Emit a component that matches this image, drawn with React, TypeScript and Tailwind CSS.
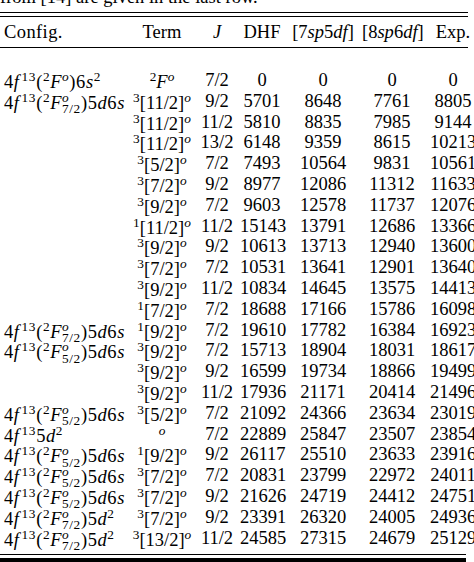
import type { ReactNode } from 'react'

/** Column template shared by the header and every data row. */
const COLS = 'grid grid-cols-[130px_64px_46px_44px_78px_60px_62px]'

type Cfg = 'A' | 'B7' | 'B5' | 'C' | 'D7' | null
type Row = { cfg: Cfg; mult: string | null; term: string; j: string; v: [string, string, string, string] }

const ROWS: Row[] = [
  { cfg: 'A', mult: null, term: '2Fo', j: '7/2', v: ['0', '0', '0', '0'] },
  { cfg: 'B7', mult: '3', term: '11/2', j: '9/2', v: ['5701', '8648', '7761', '8805'] },
  { cfg: null, mult: '3', term: '11/2', j: '11/2', v: ['5810', '8835', '7985', '9144'] },
  { cfg: null, mult: '3', term: '11/2', j: '13/2', v: ['6148', '9359', '8615', '10213'] },
  { cfg: null, mult: '3', term: '5/2', j: '7/2', v: ['7493', '10564', '9831', '10561'] },
  { cfg: null, mult: '3', term: '7/2', j: '9/2', v: ['8977', '12086', '11312', '11633'] },
  { cfg: null, mult: '3', term: '9/2', j: '7/2', v: ['9603', '12578', '11737', '12076'] },
  { cfg: null, mult: '1', term: '11/2', j: '11/2', v: ['15143', '13791', '12686', '13366'] },
  { cfg: null, mult: '3', term: '9/2', j: '9/2', v: ['10613', '13713', '12940', '13600'] },
  { cfg: null, mult: '3', term: '7/2', j: '7/2', v: ['10531', '13641', '12901', '13640'] },
  { cfg: null, mult: '3', term: '9/2', j: '11/2', v: ['10834', '14645', '13575', '14413'] },
  { cfg: null, mult: '1', term: '7/2', j: '7/2', v: ['18688', '17166', '15786', '16098'] },
  { cfg: 'B7', mult: '1', term: '9/2', j: '7/2', v: ['19610', '17782', '16384', '16923'] },
  { cfg: 'B5', mult: '3', term: '9/2', j: '7/2', v: ['15713', '18904', '18031', '18617'] },
  { cfg: null, mult: '3', term: '9/2', j: '9/2', v: ['16599', '19734', '18866', '19499'] },
  { cfg: null, mult: '3', term: '9/2', j: '11/2', v: ['17936', '21171', '20414', '21496'] },
  { cfg: 'B5', mult: '3', term: '5/2', j: '7/2', v: ['21092', '24366', '23634', '23019'] },
  { cfg: 'C', mult: null, term: 'o', j: '7/2', v: ['22889', '25847', '23507', '23854'] },
  { cfg: 'B5', mult: '1', term: '9/2', j: '9/2', v: ['26117', '25510', '23633', '23916'] },
  { cfg: 'B5', mult: '3', term: '7/2', j: '7/2', v: ['20831', '23799', '22972', '24011'] },
  { cfg: 'B5', mult: '3', term: '7/2', j: '9/2', v: ['21626', '24719', '24412', '24751'] },
  { cfg: 'D7', mult: '3', term: '7/2', j: '9/2', v: ['23391', '26320', '24005', '24936'] },
  { cfg: 'D7', mult: '3', term: '13/2', j: '11/2', v: ['24585', '27315', '24679', '25129'] },
]

const Sup = ({ children, gap = false }: { children: ReactNode; gap?: boolean }) => (
  <span className={`align-[0.5em] text-[0.72em] leading-none ${gap ? 'ml-[2px]' : ''}`}>{children}</span>
)

/** F°_{7/2}: the "o" stacked over the subscript. */
const SupSub = ({ sub }: { sub: string }) => (
  <span className="inline-flex flex-col align-[0.5em] text-[0.72em] leading-[0.85]">
    <i>o</i>
    <span>{sub}</span>
  </span>
)

function Config({ cfg }: { cfg: Cfg }) {
  if (!cfg) return null
  const head = (
    <>
      4<i>f</i>
      <Sup gap>13</Sup>
    </>
  )
  if (cfg === 'A')
    return (
      <>
        {head}(<Sup>2</Sup>
        <i>F</i>
        <Sup>
          <i>o</i>
        </Sup>
        )6<i>s</i>
        <Sup>2</Sup>
      </>
    )
  if (cfg === 'C')
    return (
      <>
        {head}5<i>d</i>
        <Sup>2</Sup>
      </>
    )
  const sub = cfg === 'B5' ? '5/2' : '7/2'
  return (
    <>
      {head}(<Sup>2</Sup>
      <i>F</i>
      <SupSub sub={sub} />)5<i>d</i>
      {cfg === 'D7' ? <Sup>2</Sup> : <>6<i>s</i></>}
    </>
  )
}

function Term({ mult, term }: { mult: string | null; term: string }) {
  if (term === '2Fo')
    return (
      <>
        <Sup>2</Sup>
        <i>F</i>
        <Sup>
          <i>o</i>
        </Sup>
      </>
    )
  if (term === 'o')
    return (
      <Sup>
        <i>o</i>
      </Sup>
    )
  return (
    <>
      <Sup>{mult}</Sup>[{term}]
      <Sup>
        <i>o</i>
      </Sup>
    </>
  )
}

export default function App() {
  return (
    <div className="h-[562px] w-[474px] overflow-hidden bg-white font-[Liberation_Serif,serif] text-[18.5px] text-black">
      <div className="-mt-[13px] h-[20px] whitespace-nowrap leading-[20px]">from [14] are given in the last row.</div>

      <div className="mt-[5px] w-[468px] border-t border-black" />
      <div className="mt-[3px] w-[468px] border-t border-black" />

      <div className={`${COLS} h-[30px] items-center whitespace-nowrap leading-[20px]`}>
        <div className="pl-[4px] tracking-[0.4px]">Config.</div>
        <div className="text-center">Term</div>
        <div className="text-center">
          <i>J</i>
        </div>
        <div className="text-center">DHF</div>
        <div className="text-center">
          [7<i>sp</i>5<i>df</i>]
        </div>
        <div className="text-center">
          [8<i>sp</i>6<i>df</i>]
        </div>
        <div className="text-center">Exp.</div>
      </div>
      <div className="w-[468px] border-t-[1.5px] border-black" />

      <div className="pt-[22px]">
        {ROWS.map((r, i) => (
          <div key={i} className={`${COLS} h-[20.8px] whitespace-nowrap leading-[20.8px]`}>
            <div className="pl-[4px] tracking-[0.6px]">
              <Config cfg={r.cfg} />
            </div>
            <div className="text-center">
              <Term mult={r.mult} term={r.term} />
            </div>
            <div className="text-center">{r.j}</div>
            {r.v.map((n, k) => (
              <div key={k} className="text-center">
                {n}
              </div>
            ))}
          </div>
        ))}
      </div>

      <div className="mt-[6px] w-[466px] border-t border-black" />
      <div className="mt-[3px] w-[466px] border-t-[4px] border-black" />
    </div>
  )
}
